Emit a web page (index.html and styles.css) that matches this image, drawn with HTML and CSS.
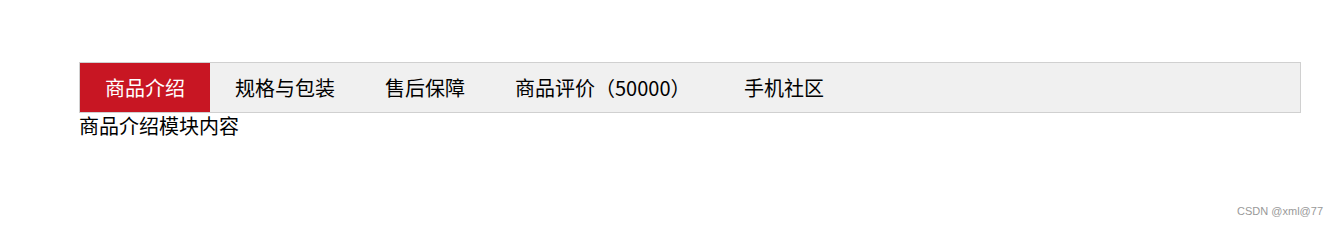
FILE: index.html
```html
<!DOCTYPE html>
<html lang="zh-CN">
<head>
    <meta charset="UTF-8">
    <title>Tab栏切换</title>
    <link rel="stylesheet" href="styles.css">
</head>
<body>
    <div class="tab">
        <ul class="tab-list">
            <li class="current">商品介绍</li>
            <li>规格与包装</li>
            <li>售后保障</li>
            <li class="wide">商品评价（50000）</li>
            <li>手机社区</li>
        </ul>
        <div class="tab-con">
            <div class="item">商品介绍模块内容</div>
        </div>
    </div>
    <div class="watermark">CSDN @xml@77</div>
</body>
</html>
```

FILE: styles.css
```css
* {
    margin: 0;
    padding: 0;
    box-sizing: border-box;
}

body {
    font-family: "Noto Sans CJK SC", "Microsoft YaHei", sans-serif;
    font-size: 20px;
    color: #000;
    background: #fff;
}

li {
    list-style: none;
}

.tab {
    width: 1222px;
    margin: 62px 0 0 79px;
}

.tab-list {
    display: flex;
    height: 51px;
    border: 1px solid #d0d0d0;
    background: #f0f0f0;
}

.tab-list li {
    height: 49px;
    line-height: 49px;
    padding: 0 25px;
    cursor: pointer;
    white-space: nowrap;
}

.tab-list .wide {
    width: 229px;
}

.tab-list .current {
    background: #c81623;
    color: #fff;
}

.item {
    line-height: 26px;
}

.watermark {
    position: absolute;
    right: 16px;
    top: 205px;
    font-family: "Liberation Sans", Arial, sans-serif;
    font-size: 11px;
    color: #999;
}
```
